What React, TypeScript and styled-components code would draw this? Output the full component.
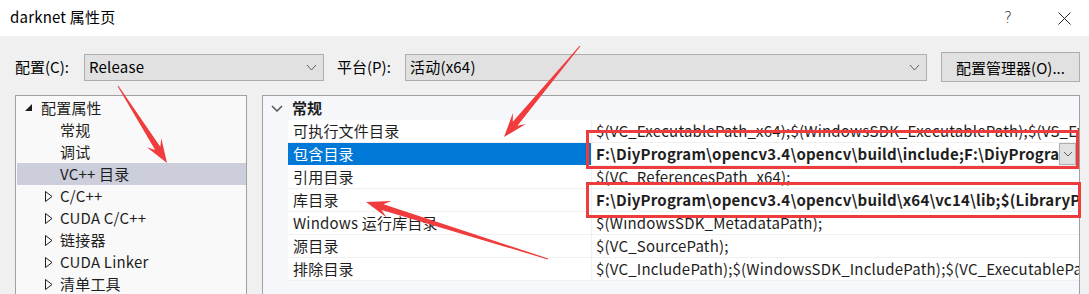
import React from "react";
import styled, { createGlobalStyle } from "styled-components";

const FONT = `"Noto Sans CJK SC", "Noto Sans", sans-serif`;

const Global = createGlobalStyle`
  html, body { margin: 0; padding: 0; background: #f0f0f0; }
  body { font-family: ${FONT}; font-size: 15px; color: #1e1e1e; }
  * { box-sizing: border-box; }
`;

const Window = styled.div`
  position: relative;
  width: 1089px;
  height: 294px;
  overflow: hidden;
  background: #f0f0f0;
`;

const TitleBar = styled.div`
  height: 36px;
  background: #ffffff;
  display: flex;
  align-items: center;
  padding-left: 10px;
  font-size: 15px;
  line-height: 20px;
  color: #000;
`;

const Title = styled.div`
  flex: 1;
  margin-top: -2px;
  letter-spacing: 0.2px;
`;

const TitleButton = styled.div<{ $w: number; $mr?: number }>`
  width: ${(p) => p.$w}px;
  margin-right: ${(p) => p.$mr || 0}px;
  height: 36px;
  display: flex;
  align-items: center;
  justify-content: center;
  color: #222;
  font-family: "DejaVu Sans", sans-serif;
  font-weight: 300;
  font-size: 15px;
`;

const ConfigRow = styled.div`
  display: flex;
  align-items: center;
  height: 30px;
  margin-top: 16px;
  padding-left: 15px;
`;

const Label = styled.div<{ $w: number; $ml?: number }>`
  width: ${(p) => p.$w}px;
  margin-left: ${(p) => p.$ml || 0}px;
  font-size: 15px;
  line-height: 20px;
  color: #000;
`;

const Combo = styled.div<{ $w: number }>`
  width: ${(p) => p.$w}px;
  height: 27px;
  background: #e1e1e1;
  border: 1px solid #adadad;
  display: flex;
  align-items: center;
  padding: 0 6px 0 4px;
  font-size: 15px;
  color: #000;
`;

const ComboText = styled.div`
  flex: 1;
  line-height: 20px;
  letter-spacing: 0.2px;
`;

const Button = styled.div`
  width: 139px;
  height: 30px;
  margin-left: 14px;
  background: #e1e1e1;
  border: 1px solid #adadad;
  display: flex;
  align-items: center;
  justify-content: center;
  font-size: 15px;
  color: #000;
`;

const Panels = styled.div`
  display: flex;
  margin-top: 13px;
  padding-left: 15px;
  gap: 15px;
`;

const Tree = styled.div`
  width: 232px;
  height: 210px;
  background: #f9f9f9;
  border: 1px solid #a0a0a0;
  padding-top: 1px;
`;

const TreeRow = styled.div<{ $indent: number; $selected?: boolean }>`
  height: 22px;
  margin-left: 1px;
  display: flex;
  align-items: center;
  padding-left: ${(p) => p.$indent}px;
  background: ${(p) => (p.$selected ? "#cccedb" : "transparent")};
  font-size: 15px;
  line-height: 20px;
  letter-spacing: 0.2px;
  color: #1e1e1e;
`;

const TreeIcon = styled.div<{ $w: number }>`
  width: ${(p) => p.$w}px;
  display: flex;
  align-items: center;
`;

const Grid = styled.div`
  width: 818px;
  height: 210px;
  background: #f5f7fa;
  border: 1px solid #a0a0a0;
`;

const GroupHeader = styled.div`
  height: 24px;
  display: flex;
  align-items: center;
  font-weight: 700;
  font-size: 15px;
  color: #1e1e1e;
`;

const Gutter = styled.div`
  width: 25px;
  display: flex;
  align-items: center;
  justify-content: center;
  padding-left: 2px;
`;

const GroupTitle = styled.div`
  padding-left: 4px;
  line-height: 20px;
`;

const PropRow = styled.div`
  height: 23px;
  display: flex;
  padding-left: 25px;
`;

const NameCell = styled.div<{ $selected?: boolean }>`
  width: 304px;
  height: 23px;
  display: flex;
  align-items: center;
  padding-left: 5px;
  background: ${(p) => (p.$selected ? "#0078d7" : "#ffffff")};
  color: ${(p) => (p.$selected ? "#ffffff" : "#1e1e1e")};
  border-right: 1px solid #eef0f3;
  border-bottom: 1px solid ${(p) => (p.$selected ? "#ffffff" : "#f0f0f0")};
  font-size: 15px;
  line-height: 20px;
  letter-spacing: 0.2px;
  white-space: nowrap;
`;

const ValueCell = styled.div<{ $bold?: boolean }>`
  flex: 1;
  min-width: 0;
  height: 23px;
  display: flex;
  align-items: center;
  padding-left: 4px;
  background: #ffffff;
  border-bottom: 1px solid #f0f0f0;
  font-size: 15px;
  line-height: 20px;
  font-weight: ${(p) => (p.$bold ? 700 : 400)};
  color: #1e1e1e;
  overflow: hidden;
`;

const ValueText = styled.div`
  flex: 1;
  min-width: 0;
  white-space: nowrap;
  overflow: hidden;
  letter-spacing: 0.2px;
`;

const DropButton = styled.div`
  width: 17px;
  height: 22px;
  margin-right: 3px;
  background: #e1e1e1;
  border: 1px solid #adadad;
  display: flex;
  align-items: center;
  justify-content: center;
  flex-shrink: 0;
`;

const Overlay = styled.svg`
  position: absolute;
  left: 0;
  top: 0;
  pointer-events: none;
`;

const Chevron = ({ w = 9, h = 5, color = "#606060", sw = 1 }: { w?: number; h?: number; color?: string; sw?: number }) => (
  <svg width={w + 2} height={h + 2} viewBox={`-1 -1 ${w + 2} ${h + 2}`}>
    <polyline points={`0,0 ${w / 2},${h} ${w},0`} fill="none" stroke={color} strokeWidth={sw} />
  </svg>
);

function arrowPoints(tx: number, ty: number, px: number, py: number) {
  const dx = px - tx;
  const dy = py - ty;
  const len = Math.hypot(dx, dy);
  const ux = dx / len;
  const uy = dy / len;
  const nx = -uy;
  const ny = ux;
  const headLen = 24;
  const headW = 17;
  const neckW = 6;
  const tailW = 1;
  const neck = { x: px - ux * headLen * 0.72, y: py - uy * headLen * 0.72 };
  const wing = { x: px - ux * headLen, y: py - uy * headLen };
  const pts = [
    [tx + (nx * tailW) / 2, ty + (ny * tailW) / 2],
    [neck.x + (nx * neckW) / 2, neck.y + (ny * neckW) / 2],
    [wing.x + (nx * headW) / 2, wing.y + (ny * headW) / 2],
    [px, py],
    [wing.x - (nx * headW) / 2, wing.y - (ny * headW) / 2],
    [neck.x - (nx * neckW) / 2, neck.y - (ny * neckW) / 2],
    [tx - (nx * tailW) / 2, ty - (ny * tailW) / 2],
  ];
  return pts.map((p) => `${p[0].toFixed(1)},${p[1].toFixed(1)}`).join(" ");
}

type TreeItem = { label: string; level: 0 | 1; kind: "open" | "closed" | "leaf"; selected?: boolean };

const treeItems: TreeItem[] = [
  { label: "配置属性", level: 0, kind: "open" },
  { label: "常规", level: 1, kind: "leaf" },
  { label: "调试", level: 1, kind: "leaf" },
  { label: "VC++ 目录", level: 1, kind: "leaf", selected: true },
  { label: "C/C++", level: 1, kind: "closed" },
  { label: "CUDA C/C++", level: 1, kind: "closed" },
  { label: "链接器", level: 1, kind: "closed" },
  { label: "CUDA Linker", level: 1, kind: "closed" },
  { label: "清单工具", level: 1, kind: "closed" },
];

type Prop = { name: string; value: string; bold?: boolean; selected?: boolean };

const props: Prop[] = [
  {
    name: "可执行文件目录",
    value:
      "$(VC_ExecutablePath_x64);$(WindowsSDK_ExecutablePath);$(VS_ExecutablePath);$(MSBuild_ExecutablePath);$(FxCopDir);$(PATH);",
  },
  {
    name: "包含目录",
    value:
      "F:\\DiyProgram\\opencv3.4\\opencv\\build\\include;F:\\DiyProgram\\opencv3.4\\opencv\\build\\include\\opencv;$(IncludePath)",
    bold: true,
    selected: true,
  },
  { name: "引用目录", value: "$(VC_ReferencesPath_x64);" },
  {
    name: "库目录",
    value: "F:\\DiyProgram\\opencv3.4\\opencv\\build\\x64\\vc14\\lib;$(LibraryPath_x64)",
    bold: true,
  },
  { name: "Windows 运行库目录", value: "$(WindowsSDK_MetadataPath);" },
  { name: "源目录", value: "$(VC_SourcePath);" },
  {
    name: "排除目录",
    value:
      "$(VC_IncludePath);$(WindowsSDK_IncludePath);$(VC_ExecutablePath_x64);$(VC_LibraryPath_x64);",
  },
];

function TreeGlyph({ kind }: { kind: TreeItem["kind"] }) {
  if (kind === "open")
    return (
      <svg width="8" height="8" viewBox="0 0 8 8">
        <polygon points="7,0 7,7 0,7" fill="#1e1e1e" />
      </svg>
    );
  if (kind === "closed")
    return (
      <svg width="8" height="11" viewBox="0 0 8 11">
        <polygon points="0.5,0.5 7,5.5 0.5,10.5" fill="none" stroke="#1e1e1e" strokeWidth="1" />
      </svg>
    );
  return null;
}

export default function App() {
  return (
    <Window>
      <Global />
      <TitleBar>
        <Title>darknet 属性页</Title>
        <TitleButton $w={30} $mr={16}>?</TitleButton>
        <TitleButton $w={50}>
          <svg width="13" height="13" viewBox="0 0 13 13">
            <path d="M0.5,0.5 L12.5,12.5 M12.5,0.5 L0.5,12.5" stroke="#222" strokeWidth="1" />
          </svg>
        </TitleButton>
      </TitleBar>

      <ConfigRow>
        <Label $w={69}>配置(C):</Label>
        <Combo $w={240}>
          <ComboText>Release</ComboText>
          <Chevron />
        </Combo>
        <Label $w={68} $ml={13}>
          平台(P):
        </Label>
        <Combo $w={522}>
          <ComboText>活动(x64)</ComboText>
          <Chevron />
        </Combo>
        <Button>配置管理器(O)...</Button>
      </ConfigRow>

      <Panels>
        <Tree>
          {treeItems.map((t) => (
            <TreeRow key={t.label} $indent={t.level === 0 ? 8 : 28} $selected={t.selected}>
              <TreeIcon $w={t.level === 0 ? 16 : 15}>
                <TreeGlyph kind={t.kind} />
              </TreeIcon>
              {t.label}
            </TreeRow>
          ))}
        </Tree>

        <Grid>
          <GroupHeader>
            <Gutter>
              <Chevron w={10} h={5} color="#555" sw={1.5} />
            </Gutter>
            <GroupTitle>常规</GroupTitle>
          </GroupHeader>
          {props.map((p) => (
            <PropRow key={p.name}>
              <NameCell $selected={p.selected}>{p.name}</NameCell>
              <ValueCell $bold={p.bold}>
                <ValueText>{p.value}</ValueText>
                {p.selected && (
                  <DropButton>
                    <Chevron w={8} h={4} />
                  </DropButton>
                )}
              </ValueCell>
            </PropRow>
          ))}
        </Grid>
      </Panels>

      <Overlay width="1089" height="294" viewBox="0 0 1089 294">
        <rect x="587.5" y="131.5" width="490" height="36" fill="none" stroke="#ee3b3b" strokeWidth="3" />
        <rect x="587.5" y="183.5" width="492" height="33" fill="none" stroke="#ee3b3b" strokeWidth="3" />
        <polygon points={arrowPoints(118, 86, 167, 163)} fill="#f03c3c" />
        <polygon points={arrowPoints(580, 46, 504, 137)} fill="#f03c3c" />
        <polygon points={arrowPoints(548, 259, 366, 202)} fill="#f03c3c" />
      </Overlay>
    </Window>
  );
}
